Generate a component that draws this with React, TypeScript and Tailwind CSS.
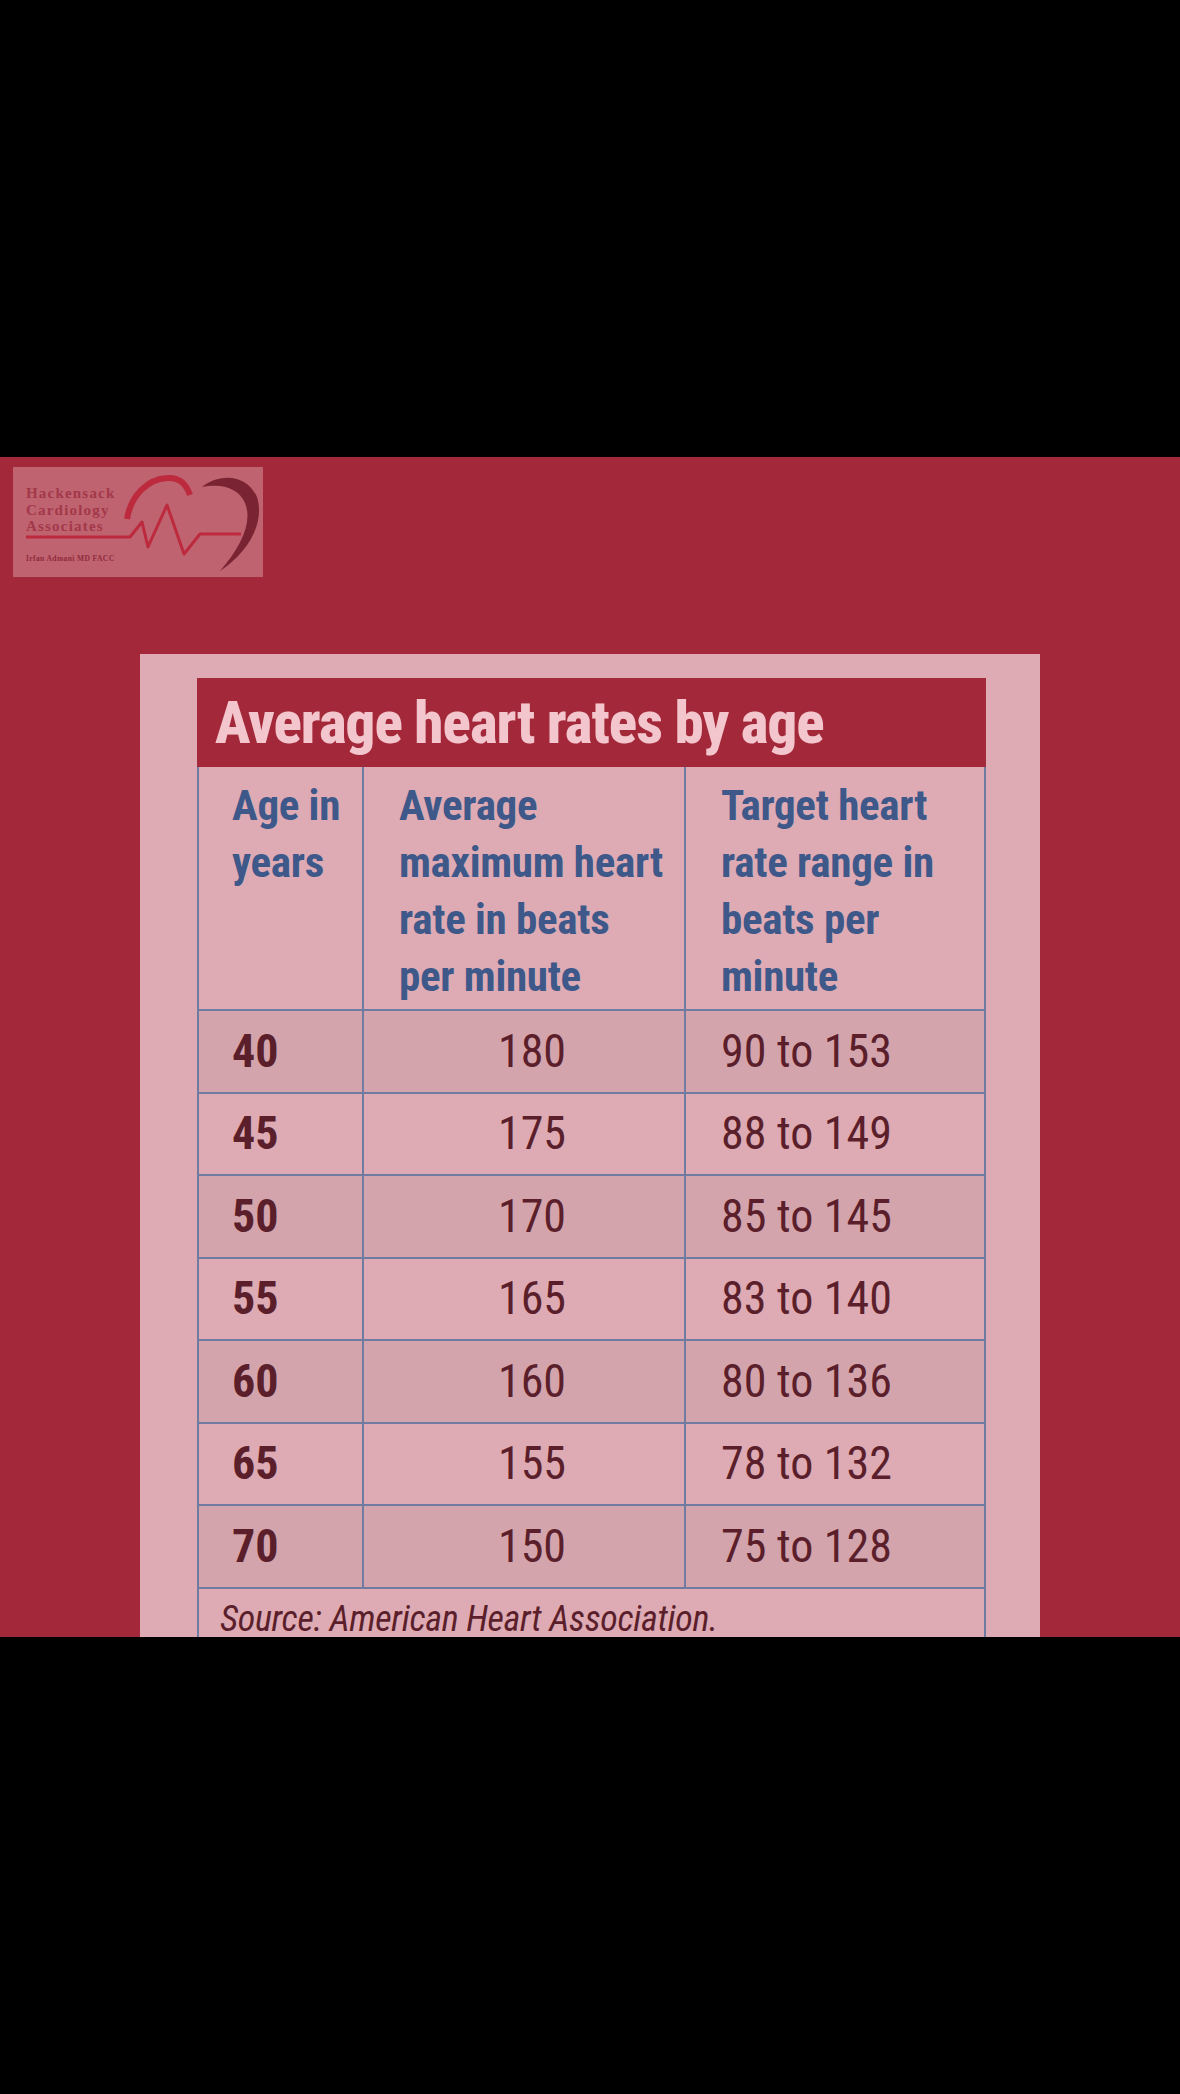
const rows: [string, string, string][] = [
  ['40', '180', '90 to 153'],
  ['45', '175', '88 to 149'],
  ['50', '170', '85 to 145'],
  ['55', '165', '83 to 140'],
  ['60', '160', '80 to 136'],
  ['65', '155', '78 to 132'],
  ['70', '150', '75 to 128'],
];

const narrow = "font-['Liberation_Sans_Narrow','Arial_Narrow','Roboto_Condensed',sans-serif]";

function Logo() {
  return (
    <div className="relative w-[250px] h-[110px] bg-[#bf6370] font-['Liberation_Serif',serif] text-[#a3384a]">
      <svg className="absolute inset-0" width="250" height="110" viewBox="0 0 250 110" fill="none">
        <path d="M13 70 H117 L129 55 L135 80 L154 38 L171 87 L187 67 H228" stroke="#bd2a3e" strokeWidth="3" strokeLinejoin="round" />
        <path d="M114 52 C118 28 135 12 154 11 C165 10 173 16 177 28" stroke="#bd2a3e" strokeWidth="6" />
        <path d="M189 20 C203 8 232 4 244 30 C252 55 236 85 207 104 C228 80 240 55 232 36 C226 22 210 16 189 20 Z" fill="#7a2433" />
      </svg>
      <div className="relative pl-[13px] pt-[18px] text-[15px] leading-[16.5px] font-bold tracking-[1.2px]">
        <div>Hackensack</div>
        <div>Cardiology</div>
        <div>Associates</div>
      </div>
      <div className="relative pl-[13px] mt-[19px] text-[7.5px] leading-[10px] font-bold tracking-[0.4px] text-[#8f2b3c]">
        Irfan Admani MD FACC
      </div>
    </div>
  );
}

export default function App() {
  return (
    <div className="w-[1180px] h-[2094px] bg-black flex flex-col">
      <div className="h-[457px] shrink-0" />
      <div className="h-[1180px] shrink-0 bg-[#a3293a] overflow-hidden flex flex-col">
        <div className="pl-[13px] pt-[10px]">
          <Logo />
        </div>
        <div className={`ml-[140px] mt-[77px] w-[900px] bg-[#deabb4] pl-[57px] pt-[24px] pb-[40px] ${narrow}`}>
          <div className="w-[789px]">
            <div className="h-[89px] bg-[#a3293a] pl-[18px] text-[59px] leading-[89px] font-extrabold text-[#f3c6cd] tracking-[-1px]">
              Average heart rates by age
            </div>
            <div className="border-x-2 border-[#6f7ba1]">
              <div className="grid grid-cols-[165px_322px_1fr] h-[244px] border-b-2 border-[#6f7ba1] text-[43px] leading-[57px] font-bold text-[#3d5889] tracking-[-0.3px]">
                <div className="border-r-2 border-[#6f7ba1] pl-[33px] pt-[10px]">Age in<br />years</div>
                <div className="border-r-2 border-[#6f7ba1] pl-[35px] pt-[10px]">Average<br />maximum heart<br />rate in beats<br />per minute</div>
                <div className="pl-[35px] pt-[10px]">Target heart<br />rate range in<br />beats per<br />minute</div>
              </div>
              {rows.map(([age, max, range], i) => (
                <div
                  key={age}
                  className={`grid grid-cols-[165px_322px_1fr] h-[82.5px] border-b-2 border-[#6f7ba1] text-[46px] text-[#5b1f2b] ${i % 2 === 0 ? 'bg-[#d4a4ad]' : ''}`}
                >
                  <div className="border-r-2 border-[#6f7ba1] pl-[33px] flex items-center font-bold">{age}</div>
                  <div className="border-r-2 border-[#6f7ba1] pl-[16px] flex items-center justify-center">{max}</div>
                  <div className="pl-[35px] flex items-center">{range}</div>
                </div>
              ))}
              <div className="h-[80px] pl-[21px] pt-[10px] text-[36px] leading-[40px] italic text-[#5b1f2b] tracking-[-0.3px]">
                Source: American Heart Association.
              </div>
            </div>
          </div>
        </div>
      </div>
      <div className="flex-1" />
    </div>
  );
}
